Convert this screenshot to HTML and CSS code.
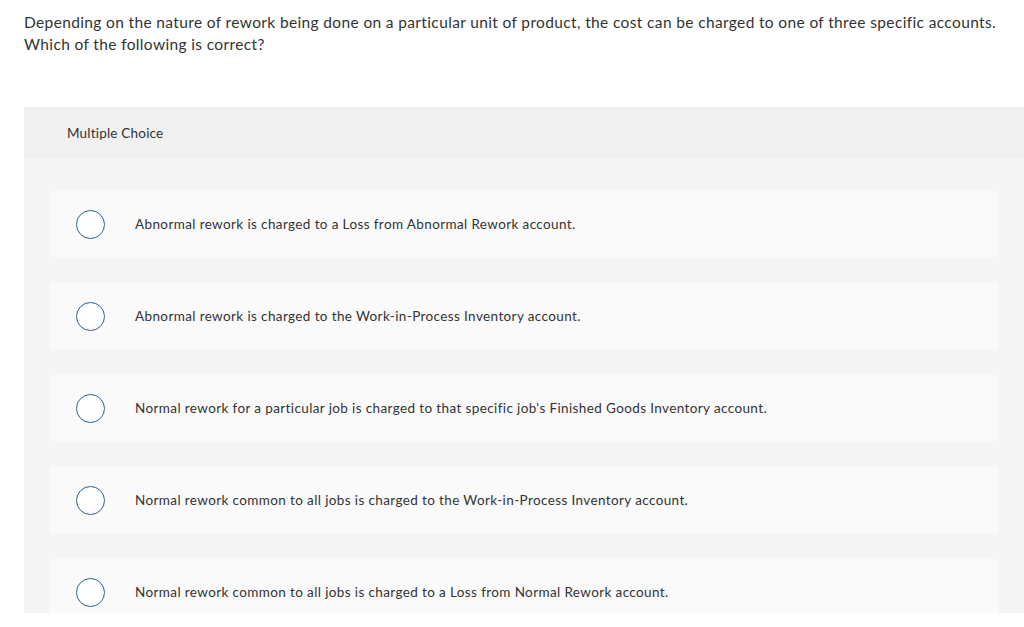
FILE: index.html
```html
<!DOCTYPE html>
<html lang="en">
<head>
<meta charset="utf-8">
<title>Multiple Choice</title>
<link rel="stylesheet" href="styles.css">
</head>
<body>
<div class="page">
  <p class="question">Depending on the nature of rework being done on a particular unit of product, the cost can be charged to one of three specific accounts. Which of the following is correct?</p>
  <section class="panel">
    <div class="panel-head">Multiple Choice</div>
    <div class="options">
      <label class="option"><span class="radio"></span><span class="opt-text">Abnormal rework is charged to a Loss from Abnormal Rework account.</span></label>
      <label class="option"><span class="radio"></span><span class="opt-text">Abnormal rework is charged to the Work-in-Process Inventory account.</span></label>
      <label class="option"><span class="radio"></span><span class="opt-text">Normal rework for a particular job is charged to that specific job's Finished Goods Inventory account.</span></label>
      <label class="option"><span class="radio"></span><span class="opt-text">Normal rework common to all jobs is charged to the Work-in-Process Inventory account.</span></label>
      <label class="option"><span class="radio"></span><span class="opt-text">Normal rework common to all jobs is charged to a Loss from Normal Rework account.</span></label>
    </div>
  </section>
</div>
</body>
</html>
```
FILE: styles.css
```css
html, body {
  margin: 0;
  padding: 0;
  background: #ffffff;
}
body {
  font-family: Lato, "Open Sans", sans-serif;
  color: #333333;
}
.page {
  height: 613px;
  overflow: hidden;
  padding-left: 24px;
}
.question {
  margin: 0;
  padding-top: 11px;
  font-size: 15.5px;
  letter-spacing: 0.36px;
  line-height: 22px;
  color: #333333;
  max-width: 985px;
}
.panel {
  margin-top: 52px;
  background: #f5f5f5;
  height: 506px;
}
.panel-head {
  background: #f0f0f0;
  height: 51px;
  padding-left: 43px;
  display: flex;
  align-items: center;
  font-size: 13.5px;
  letter-spacing: 0.2px;
  color: #333333;
}
.options {
  display: flex;
  flex-direction: column;
  gap: 26px;
  padding: 33px 26px 0 26px;
  width: 948px;
}
.option {
  display: flex;
  align-items: center;
  height: 66px;
  flex-shrink: 0;
  background: #fafafa;
  border-radius: 4px;
}
.radio {
  box-sizing: border-box;
  width: 29px;
  height: 29px;
  border: 1.5px solid #2a5f95;
  border-radius: 50%;
  background: #ffffff;
  margin-left: 26px;
  flex-shrink: 0;
}
.opt-text {
  margin-left: 30px;
  font-size: 13.5px;
  letter-spacing: 0.38px;
  color: #333333;
}
```
